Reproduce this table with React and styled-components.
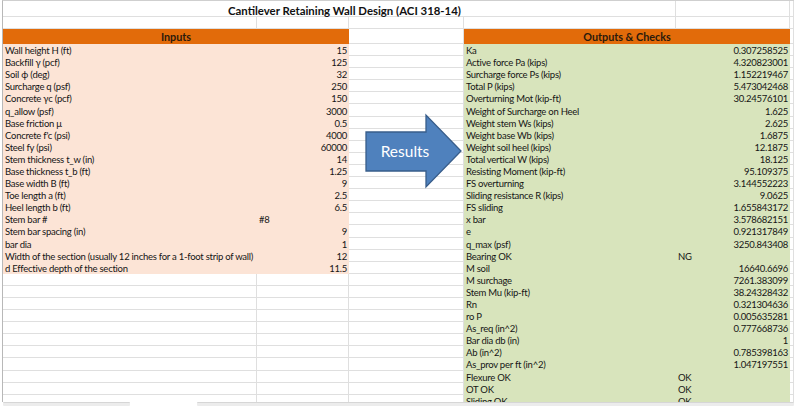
import React from "react";
import styled, { createGlobalStyle } from "styled-components";

const GlobalStyle = createGlobalStyle`
  html, body { margin: 0; padding: 0; background: #ffffff; }
  body { font-family: Lato, "Liberation Sans", sans-serif; }
`;

const FILLS = {
  none: "#ffffff",
  peach: "#fce4d6",
  green: "#d8e4bc",
  orange: "#e26b0a",
};

const Page = styled.div`
  width: 794px;
  height: 406px;
  overflow: hidden;
  display: flex;
  flex-direction: column;
  background: #fff;
`;

const Sheet = styled.div`
  position: relative;
  flex: 1;
  overflow: hidden;
  border-top: 1px solid #cfcfcf;
  border-left: 1px solid #b8b8b8;
  margin-left: 2px;
`;

const Grid = styled.div`
  display: grid;
  grid-template-columns: 254px 92px 115px 212px 114px 1fr;
  grid-template-rows: 16px 12px 15px repeat(30, 12.1px);
`;

const Cell = styled.div`
  box-sizing: border-box;
  display: flex;
  align-items: center;
  padding: 1px 2px 0 2px;
  overflow: ${(p) => (p.$spill ? "visible" : "hidden")};
  white-space: nowrap;
  font-size: 9.5px;
  letter-spacing: -0.25px;
  line-height: 11px;
  color: #151515;
  background: ${(p) => FILLS[p.$fill || "none"]};
  box-shadow: ${(p) =>
    (p.$fill || "none") === "none" ? "inset -1px -1px 0 #dfdfdf" : "none"};
  justify-content: ${(p) =>
    p.$align === "right" ? "flex-end" : p.$align === "center" ? "center" : "flex-start"};
  grid-column: ${(p) => p.$span || "auto"};
`;

const TitleCell = styled(Cell)`
  font-size: 11.4px;
  letter-spacing: 0;
  font-weight: 700;
  color: #111;
  padding: 2px 0 0 10px;
`;

const HeaderCell = styled(Cell)`
  font-size: 10.8px;
  letter-spacing: 0;
  font-weight: 700;
  color: #2b1a0c;
  padding-top: 0;
`;

const ArrowWrap = styled.svg`
  position: absolute;
  left: 360px;
  top: 109px;
  width: 102px;
  height: 82px;
  overflow: visible;
`;

const ArrowLabel = styled.text`
  font-family: Lato, "Liberation Sans", sans-serif;
  font-size: 15.5px;
  fill: #ffffff;
`;

const Footer = styled.div`
  height: 4px;
  display: flex;
  background: #ffffff;
`;

const ScrollBar = styled.div`
  box-sizing: border-box;
  height: 4px;
  width: ${(p) => p.$w};
  margin-left: ${(p) => p.$ml};
  background: #ececec;
  border-top: 1px solid #d6d6d6;
  border-radius: 1px;
`;

const inputs = [
  ["Wall height H (ft)", "15"],
  ["Backfill γ (pcf)", "125"],
  ["Soil ϕ (deg)", "32"],
  ["Surcharge q (psf)", "250"],
  ["Concrete γc (pcf)", "150"],
  ["q_allow (psf)", "3000"],
  ["Base friction μ", "0.5"],
  ["Concrete f'c (psi)", "4000"],
  ["Steel fy (psi)", "60000"],
  ["Stem thickness t_w (in)", "14"],
  ["Base thickness t_b (ft)", "1.25"],
  ["Base width B (ft)", "9"],
  ["Toe length a (ft)", "2.5"],
  ["Heel length b (ft)", "6.5"],
  ["Stem bar #", "#8", "left"],
  ["Stem bar spacing (in)", "9"],
  ["bar dia", "1"],
  ["Width of the section (usually 12 inches for a 1-foot strip of wall)", "12"],
  ["d Effective depth of the section", "11.5"],
];

const outputs = [
  ["Ka", "0.307258525"],
  ["Active force Pa (kips)", "4.320823001"],
  ["Surcharge force Ps (kips)", "1.152219467"],
  ["Total P (kips)", "5.473042468"],
  ["Overturning Mot (kip-ft)", "30.24576101"],
  ["Weight of Surcharge on Heel", "1.625"],
  ["Weight stem Ws (kips)", "2.625"],
  ["Weight base Wb (kips)", "1.6875"],
  ["Weight soil heel (kips)", "12.1875"],
  ["Total vertical W (kips)", "18.125"],
  ["Resisting Moment (kip-ft)", "95.109375"],
  ["FS overturning", "3.144552223"],
  ["Sliding resistance R (kips)", "9.0625"],
  ["FS sliding", "1.655843172"],
  ["x bar", "3.578682151"],
  ["e", "0.921317849"],
  ["q_max (psf)", "3250.843408"],
  ["Bearing OK", "NG", "left"],
  ["M soil", "16640.6696"],
  ["M surchage", "7261.383099"],
  ["Stem Mu (kip-ft)", "38.24328432"],
  ["Rn", "0.321304636"],
  ["ro P", "0.005635281"],
  ["As_req (in^2)", "0.777668736"],
  ["Bar dia db (in)", "1"],
  ["Ab (in^2)", "0.785398163"],
  ["As_prov per ft (in^2)", "1.047197551"],
  ["Flexure OK", "OK", "left"],
  ["OT OK", "OK", "left"],
  ["Sliding OK", "OK", "left"],
];

function ResultsArrow() {
  return (
    <ArrowWrap viewBox="0 0 102 82">
      <polygon
        points="3,22 63,22 63,5 98,41 63,77 63,61 3,61"
        fill="#4f81bd"
        stroke="#385d8a"
        strokeWidth="1.3"
        strokeLinejoin="miter"
      />
      <ArrowLabel x="42" y="46.5" textAnchor="middle">
        Results
      </ArrowLabel>
    </ArrowWrap>
  );
}

export default function App() {
  const bodyRows = outputs.map((out, i) => {
    const inp = inputs[i];
    return (
      <React.Fragment key={i}>
        {inp ? (
          <>
            <Cell $fill="peach" $spill>
              {inp[0]}
            </Cell>
            <Cell $fill="peach" $align={inp[2] || "right"}>
              {inp[1]}
            </Cell>
          </>
        ) : (
          <>
            <Cell />
            <Cell />
          </>
        )}
        <Cell />
        <Cell $fill="green" $spill>
          {out[0]}
        </Cell>
        <Cell $fill="green" $align={out[2] || "right"}>
          {out[1]}
        </Cell>
        <Cell />
      </React.Fragment>
    );
  });

  return (
    <Page>
      <GlobalStyle />
      <Sheet>
        <Grid>
          <TitleCell $span="1 / 5" $align="center">
            Cantilever Retaining Wall Design (ACI 318-14)
          </TitleCell>
          <Cell />
          <Cell />

          <Cell />
          <Cell />
          <Cell />
          <Cell />
          <Cell />
          <Cell />

          <HeaderCell $fill="orange" $span="1 / 3" $align="center">
            Inputs
          </HeaderCell>
          <Cell />
          <HeaderCell $fill="orange" $span="4 / 6" $align="center">
            Outputs &amp; Checks
          </HeaderCell>
          <Cell />

          {bodyRows}
        </Grid>
        <ResultsArrow />
      </Sheet>
      <Footer>
        <ScrollBar $w="127px" $ml="3px" />
        <ScrollBar $w="597px" $ml="67px" />
      </Footer>
    </Page>
  );
}
